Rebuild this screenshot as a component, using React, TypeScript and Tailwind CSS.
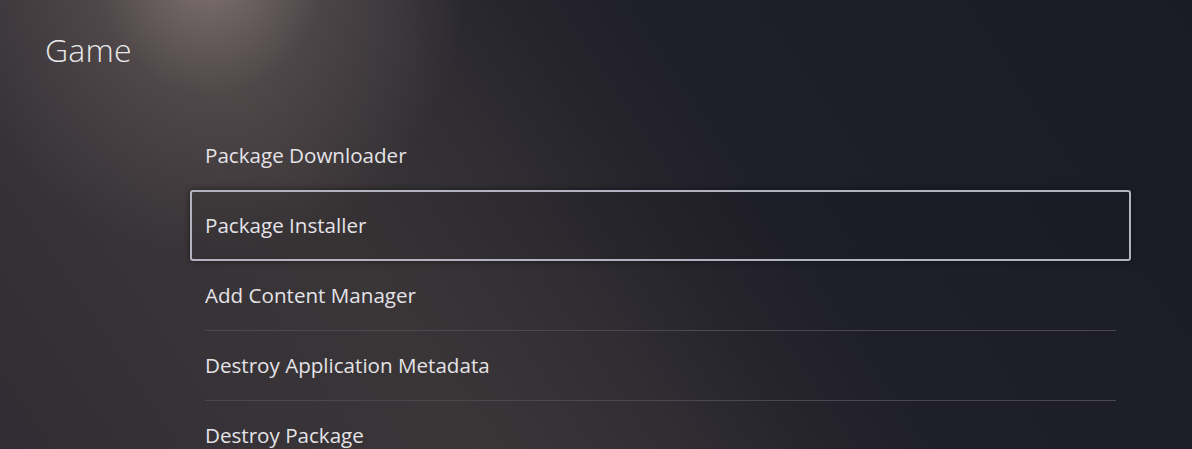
import React from 'react';

const items = [
  'Package Downloader',
  'Package Installer',
  'Add Content Manager',
  'Destroy Application Metadata',
  'Destroy Package',
];

const selectedIndex = 1;

const App = () => {
  return (
    <div
      className="relative w-[1192px] h-[449px] overflow-hidden bg-[#1b1b26] text-[#e8e7ea]"
      style={{ fontFamily: '"Open Sans", "Noto Sans", sans-serif' }}
    >
      {/* light beam from the top left */}
      <div className="absolute inset-0 bg-[linear-gradient(56deg,#2f2d33_0%,#363237_15%,#3a3537_32%,#312e33_45%,#26252d_54%,#1f1f2a_63%,#1b1b26_100%)]" />
      <div className="absolute inset-0 bg-[radial-gradient(ellipse_260px_300px_at_210px_-40px,rgba(145,130,128,0.85)_0%,rgba(105,94,94,0.45)_45%,rgba(80,72,72,0)_100%)]" />

      <div className="relative">
        <h1 className="pl-[45px] pt-[28px] text-[32px] font-light leading-[44px] tracking-[0.2px]">Game</h1>

        <ul className="mt-[48px] ml-[190px] w-[941px]">
          {items.map((item, i) => {
            const selected = i === selectedIndex;
            const divider = i > selectedIndex + 1;
            return (
              <li key={item} className="h-[70px]">
                {selected ? (
                  <div className="h-[71px] flex items-center px-[13px] rounded-[3px] border-2 border-[#b3b2c0] bg-black/5 shadow-[0_0_6px_rgba(0,0,0,0.5)]">
                    <span className="text-[20.6px] leading-none text-[#e4e3e7]">{item}</span>
                  </div>
                ) : (
                  <div className="mx-[15px] h-full flex items-center">
                    <div className={`w-full h-full flex items-center ${divider ? 'border-t border-[#4a4750]' : ''}`}>
                      <span className="text-[20.6px] leading-none text-[#e4e3e7]">{item}</span>
                    </div>
                  </div>
                )}
              </li>
            );
          })}
        </ul>
      </div>
    </div>
  );
};

export default App;
